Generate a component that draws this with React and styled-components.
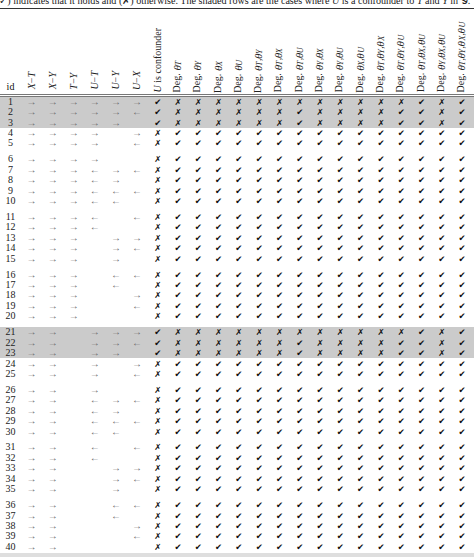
import React from "react";
import styled, { createGlobalStyle } from "styled-components";

const COLS = "21px repeat(6, 21.1px) repeat(16, 20.3px)";
const SERIF = `"Liberation Serif", "Times New Roman", serif`;

const uCombos = [
  ["→", "→", "→"], ["→", "→", "←"], ["→", "→", ""], ["→", "", "→"], ["→", "", "←"],
  ["→", "", ""], ["←", "→", "←"], ["←", "→", ""], ["←", "←", "←"], ["←", "←", ""],
  ["←", "", "←"], ["←", "", ""], ["", "→", "→"], ["", "→", "←"], ["", "→", ""],
  ["", "←", "←"], ["", "←", ""], ["", "", "→"], ["", "", "←"], ["", "", ""]
];

const shadedMarks = [
  [1, 0, 0, 0, 0, 0, 0, 0, 0, 0, 0, 0, 0, 1, 0, 1],
  [1, 0, 0, 0, 0, 0, 0, 1, 0, 0, 0, 0, 1, 1, 0, 1],
  [1, 0, 0, 0, 0, 0, 0, 1, 0, 0, 0, 0, 1, 1, 0, 1]
];
const plainMarks = [0, 1, 1, 1, 1, 1, 1, 1, 1, 1, 1, 1, 1, 1, 1, 1];

const rows = Array.from({ length: 40 }, (_, i) => {
  const k = i % 20;
  const [ut, uy, ux] = uCombos[k];
  return {
    id: i + 1,
    arrows: ["→", "→", i < 20 ? "→" : "", ut, uy, ux],
    marks: k < 3 ? shadedMarks[k] : plainMarks,
    shaded: k < 3
  };
});

// groups of five rows, with a little space between them
const groups = [];
for (let i = 0; i < rows.length; i += 5) groups.push(rows.slice(i, i + 5));

const arrowHeads = [
  ["X", "T"], ["X", "Y"], ["T", "Y"], ["U", "T"], ["U", "Y"], ["U", "X"]
];

const degHeads = [
  ["T"], ["Y"], ["X"], ["U"],
  ["T", "Y"], ["T", "X"], ["T", "U"], ["Y", "X"], ["Y", "U"], ["X", "U"],
  ["T", "Y", "X"], ["T", "Y", "U"], ["T", "X", "U"], ["Y", "X", "U"],
  ["T", "Y", "X", "U"]
];

const Theta = ({ s }) => (
  <ThetaBox>
    <i>θ</i>
    <Sub>{s}</Sub>
  </ThetaBox>
);

const App = () => {
  return (
    <Page>
      <GlobalStyle />
      <Caption>
        (✓) indicates that it holds and (✗) otherwise. The shaded rows are the cases where{" "}
        <i>U</i> is a confounder to <i>T</i> and <i>Y</i> in 𝒢.
      </Caption>
      <TopRule />
      <HeaderRow>
        <HeadCell>
          <IdHead>id</IdHead>
        </HeadCell>
        {arrowHeads.map(([a, b]) => (
          <HeadCell key={a + b} lift>
            <Rotated>
              <i>{a}</i>
              <Minus>−</Minus>
              <i>{b}</i>
            </Rotated>
          </HeadCell>
        ))}
        <HeadCell>
          <Rotated>
            <i>U</i> is confounder
          </Rotated>
        </HeadCell>
        {degHeads.map((list) => (
          <HeadCell key={list.join("")}>
            <Rotated>
              Deg.{" "}
              {list.map((s, j) => (
                <React.Fragment key={s}>
                  {j > 0 && <Comma>,</Comma>}
                  <Theta s={s} />
                </React.Fragment>
              ))}
            </Rotated>
          </HeadCell>
        ))}
      </HeaderRow>
      <DoubleRule />
      {groups.map((g, gi) => (
        <Group key={gi} first={gi === 0}>
          {g.map((r) => (
            <Row key={r.id} shaded={r.shaded}>
              <IdCell>{r.id}</IdCell>
              {r.arrows.map((a, j) => (
                <ArrowCell key={j}>{a}</ArrowCell>
              ))}
              {r.marks.map((m, j) => (
                <MarkCell key={j} cross={!m}>
                  {m ? "✔" : "✗"}
                </MarkCell>
              ))}
            </Row>
          ))}
        </Group>
      ))}
      <BottomBand />
    </Page>
  );
};

const GlobalStyle = createGlobalStyle`
  html, body {
    margin: 0;
    padding: 0;
    background: #ffffff;
  }
  body {
    font-family: "Liberation Serif", "Times New Roman", serif;
    color: #111;
  }
`;

const Page = styled.div`
  width: 474px;
  height: 557px;
  overflow: hidden;
  font-family: ${SERIF};
`;

const Caption = styled.div`
  height: 7px;
  margin-left: -4px;
  font-family: ${SERIF};
  font-size: 10.1px;
  line-height: 7px;
  white-space: nowrap;
  color: #222;
  transform: translateY(-3px);
`;

const TopRule = styled.div`
  height: 1px;
  background: #333;
  margin-top: 0.5px;
`;

const HeaderRow = styled.div`
  display: grid;
  grid-template-columns: ${COLS};
  height: 85px;
`;

const HeadCell = styled.div`
  display: flex;
  flex-direction: column;
  justify-content: flex-end;
  align-items: center;
  padding-bottom: ${(p) => (p.lift ? "4px" : "1px")};
`;

const IdHead = styled.span`
  font-family: ${SERIF};
  font-size: 10px;
  line-height: 10px;
  margin-bottom: 1px;
`;

const Rotated = styled.span`
  writing-mode: vertical-rl;
  transform: rotate(180deg);
  white-space: nowrap;
  font-family: ${SERIF};
  font-size: 10px;
  line-height: 10px;
  color: #222;
`;

const Minus = styled.span`
  margin: 0 2px;
`;

const Comma = styled.span`
  margin-right: 2.5px;
`;

const ThetaBox = styled.span`
  font-family: ${SERIF};
  font-size: 11px;
  margin-left: 1.5px;
`;

const Sub = styled.span`
  font-style: italic;
  font-size: 8px;
  vertical-align: -2px;
  margin-left: 0.5px;
`;

const DoubleRule = styled.div`
  height: 3px;
  box-sizing: border-box;
  border-top: 1px solid #777;
  border-bottom: 1px solid #777;
`;

const Group = styled.div`
  margin-top: ${(p) => (p.first ? "0" : "5.45px")};
`;

const Row = styled.div`
  display: grid;
  grid-template-columns: ${COLS};
  height: 10.45px;
  background: ${(p) => (p.shaded ? "#cbcbcb" : "transparent")};
`;

const Cell = styled.div`
  display: flex;
  align-items: center;
  justify-content: center;
  line-height: 10px;
`;

const IdCell = styled(Cell)`
  font-family: ${SERIF};
  font-size: 10px;
  color: #222;
`;

const ArrowCell = styled(Cell)`
  font-family: "Liberation Sans", "DejaVu Sans", sans-serif;
  font-size: 10px;
  color: #6a6a6a;
`;

const MarkCell = styled(Cell)`
  font-family: "DejaVu Sans", sans-serif;
  font-size: 8.5px;
  font-weight: ${(p) => (p.cross ? 700 : 400)};
  color: #111;
`;

const BottomBand = styled.div`
  margin-top: 0.5px;
  height: 4px;
  background: #dedede;
`;

export default App;
